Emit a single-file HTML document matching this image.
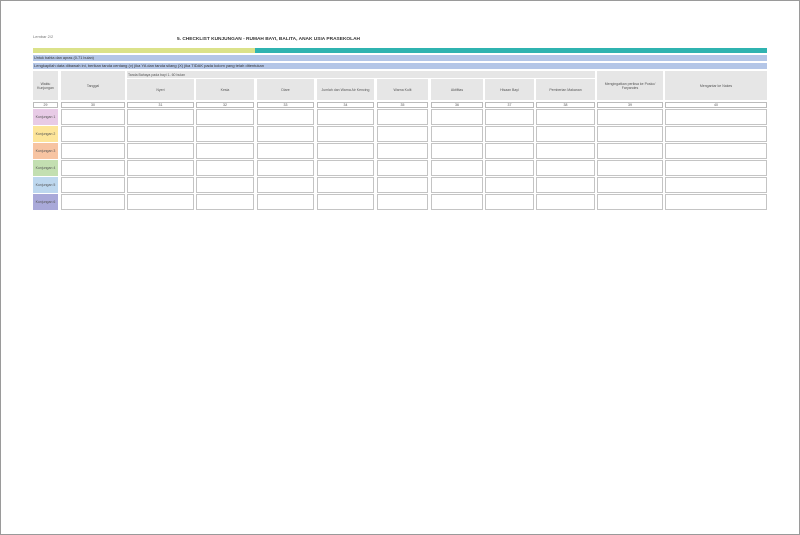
<!DOCTYPE html>
<html><head><meta charset="utf-8"><style>
body{margin:0;width:800px;height:535px;background:#fff;font-family:"Liberation Sans",sans-serif;position:relative;overflow:hidden}
.frame{position:absolute;left:0;top:0;width:798px;height:533px;border:1px solid #9a9a9a}
.a{position:absolute;box-sizing:border-box}
.h{background:#e6e6e6;font-size:3.5px;color:#555;display:flex;align-items:center;justify-content:center;text-align:center}
.n{border:1px solid #bbb;font-size:3.5px;color:#555;text-align:center;line-height:4px;background:#fff}
.k{font-size:3.5px;color:#555;display:flex;align-items:center;justify-content:center}
</style></head><body>
<div class="frame"></div>
<div class="a" style="left:33px;top:34px;font-size:4px;color:#777">Lembar 2/2</div>
<div class="a" style="left:177px;top:37px;font-size:4.8px;color:#333;font-weight:bold;white-space:nowrap">5. CHECKLIST KUNJUNGAN - RUMAH BAYI, BALITA, ANAK USIA PRASEKOLAH</div>
<div class="a" style="left:33px;top:48px;width:222px;height:5px;background:#dbe28a"></div>
<div class="a" style="left:255px;top:48px;width:512px;height:5px;background:#2fb3b0"></div>
<div class="a" style="left:33px;top:55px;width:734px;height:6px;background:#b4c6e7;font-size:3.8px;color:#333;line-height:6px;padding-left:1px">Untuk bahta dan apras (0-71 bulan)</div>
<div class="a" style="left:33px;top:63px;width:734px;height:6px;background:#b4c6e7;font-size:4px;color:#333;line-height:6px;padding-left:1px">Lengkapilah data dibawah ini, berikan tanda centang (v) jika YA dan tanda silang (X) jika TIDAK pada kolom yang telah ditentukan</div>
<div class="a h" style="left:33px;top:71px;width:25px;height:29px">Waktu<br>Kunjungan</div>
<div class="a h" style="left:61px;top:71px;width:64px;height:29px">Tanggal</div>
<div class="a h" style="left:127px;top:71px;width:468px;height:7px;justify-content:flex-start;padding-left:1px">Tanda Bahaya pada bayi 1- 60 bulan</div>
<div class="a h" style="left:127px;top:79px;width:67px;height:21px">Nyeri</div>
<div class="a h" style="left:196px;top:79px;width:58px;height:21px">Kesia</div>
<div class="a h" style="left:257px;top:79px;width:57px;height:21px">Diare</div>
<div class="a h" style="left:317px;top:79px;width:57px;height:21px">Jumlah dan Warna Air Kencing</div>
<div class="a h" style="left:377px;top:79px;width:51px;height:21px">Warna Kulit</div>
<div class="a h" style="left:431px;top:79px;width:52px;height:21px">Aktifitas</div>
<div class="a h" style="left:485px;top:79px;width:49px;height:21px">Hisaan Bayi</div>
<div class="a h" style="left:536px;top:79px;width:59px;height:21px">Pemberian Makanan</div>
<div class="a h" style="left:597px;top:71px;width:66px;height:29px">Mengingatkan periksa ke Posko/<br>Faryandes</div>
<div class="a h" style="left:665px;top:71px;width:102px;height:29px">Mengantar ke Nakes</div>
<div class="a n" style="left:33px;top:102px;width:25px;height:6px">29</div>
<div class="a n" style="left:61px;top:102px;width:64px;height:6px">30</div>
<div class="a n" style="left:127px;top:102px;width:67px;height:6px">31</div>
<div class="a n" style="left:196px;top:102px;width:58px;height:6px">32</div>
<div class="a n" style="left:257px;top:102px;width:57px;height:6px">33</div>
<div class="a n" style="left:317px;top:102px;width:57px;height:6px">34</div>
<div class="a n" style="left:377px;top:102px;width:51px;height:6px">35</div>
<div class="a n" style="left:431px;top:102px;width:52px;height:6px">36</div>
<div class="a n" style="left:485px;top:102px;width:49px;height:6px">37</div>
<div class="a n" style="left:536px;top:102px;width:59px;height:6px">38</div>
<div class="a n" style="left:597px;top:102px;width:66px;height:6px">39</div>
<div class="a n" style="left:665px;top:102px;width:102px;height:6px">40</div>
<div class="a k" style="left:33px;top:109px;width:25px;height:16px;background:#e8cbe6">Kunjungan 1</div>
<div class="a k" style="left:33px;top:126px;width:25px;height:16px;background:#fde59a">Kunjungan 2</div>
<div class="a k" style="left:33px;top:143px;width:25px;height:16px;background:#f7c4a2">Kunjungan 3</div>
<div class="a k" style="left:33px;top:160px;width:25px;height:16px;background:#c3dfb1">Kunjungan 4</div>
<div class="a k" style="left:33px;top:177px;width:25px;height:16px;background:#bdd7ee">Kunjungan 5</div>
<div class="a k" style="left:33px;top:194px;width:25px;height:16px;background:#a9a9d9">Kunjungan 6</div>
<svg class="a" style="left:0;top:0" width="800" height="535">
<g fill="#fff" stroke="#c4c4c4" stroke-width="1">
<g id="r"><rect x="61.5" y="109.5" width="63" height="15"/><rect x="127.5" y="109.5" width="66" height="15"/><rect x="196.5" y="109.5" width="57" height="15"/><rect x="257.5" y="109.5" width="56" height="15"/><rect x="317.5" y="109.5" width="56" height="15"/><rect x="377.5" y="109.5" width="50" height="15"/><rect x="431.5" y="109.5" width="51" height="15"/><rect x="485.5" y="109.5" width="48" height="15"/><rect x="536.5" y="109.5" width="58" height="15"/><rect x="597.5" y="109.5" width="65" height="15"/><rect x="665.5" y="109.5" width="101" height="15"/></g>
<use href="#r" y="17"/><use href="#r" y="34"/><use href="#r" y="51"/><use href="#r" y="68"/><use href="#r" y="85"/>
</g></svg>
</body></html>
